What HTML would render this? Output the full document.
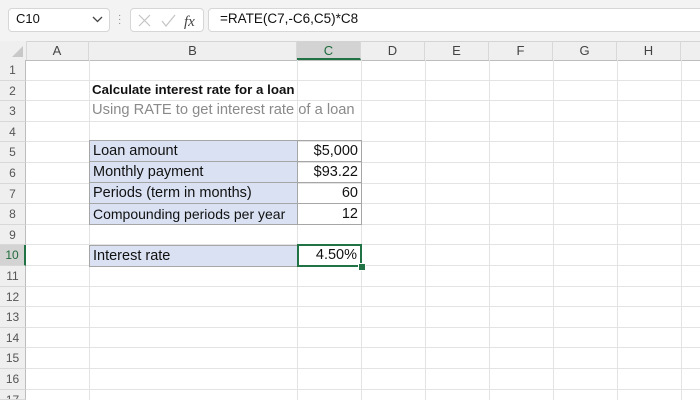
<!DOCTYPE html>
<html style="width:700px;height:400px;overflow:hidden"><head><style>
body{margin:0;width:700px;height:400px;overflow:hidden;background:#fff;font-family:"Liberation Sans",sans-serif;position:relative}
.a{position:absolute}
.top{left:0;top:0;width:700px;height:41px;background:#f3f3f3}
.box{background:#fff;border:1px solid #d6d6d6;border-radius:4px;height:22px}
.hdr{top:41px;height:18px;background:#efefef;border-bottom:1px solid #bdbdbd;border-top:1px solid #d4d4d4}
.ch{top:41px;height:19px;text-align:center;font-size:13px;line-height:19px;color:#444;border-right:1px solid #d8d8d8;box-sizing:border-box}
.rh{left:0;width:26px;text-align:center;font-size:12px;color:#555;background:#efefef;border-bottom:1px solid #d8d8d8;box-sizing:border-box;border-right:1px solid #bdbdbd}
.hl{left:26px;width:674px;height:1px;background:#e3e3e3}
.vl{top:60px;width:1px;height:340px;background:#e3e3e3}
.t{font-size:14px;color:#111;white-space:nowrap}
.cell{box-sizing:border-box;border:1px solid #a6a6a6;font-size:14.5px;line-height:20px;color:#111;white-space:nowrap}
</style></head><body>
<div class="a top"></div>
<div class="a box" style="left:8px;top:8px;width:100px"></div>
<div class="a t" style="left:16px;top:11px;font-size:13px">C10</div>
<svg class="a" style="left:92px;top:16px" width="11" height="7"><path d="M1 1l4.5 4.5L10 1" fill="none" stroke="#444" stroke-width="1.3"/></svg>
<div class="a" style="left:118px;top:14px;color:#888;font-size:10px;line-height:4px">·<br>·<br>·</div>
<div class="a box" style="left:130px;top:8px;width:72px"></div>
<svg class="a" style="left:137px;top:13px" width="60" height="16"><path d="M2 2l11 11M13 2L2 13" stroke="#c4c4c4" stroke-width="1.2"/><path d="M25 8l4 5 9-11" fill="none" stroke="#c4c4c4" stroke-width="1.2"/><text x="47" y="13" font-family="Liberation Serif" font-style="italic" font-size="15" fill="#444">fx</text></svg>
<div class="a box" style="left:208px;top:8px;width:500px"></div>
<div class="a t" style="left:220px;top:11px;font-size:13.5px">=RATE(C7,-C6,C5)*C8</div>
<div class="a hdr" style="left:0;width:700px"></div>
<div class="a" style="left:0;top:41px;width:26px;height:19px;background:#efefef;border-right:1px solid #d8d8d8"></div>
<svg class="a" style="left:12px;top:46px" width="12" height="12"><path d="M11 0V11H0Z" fill="#c8c8c8"/></svg>
<div class="a ch" style="left:26px;width:63px">A</div>
<div class="a ch" style="left:89px;width:208px">B</div>
<div class="a ch" style="left:297px;width:64px;background:#d3d3d3;color:#1e6b3c;border-bottom:2px solid #217346">C</div>
<div class="a ch" style="left:361px;width:64px">D</div>
<div class="a ch" style="left:425px;width:64px">E</div>
<div class="a ch" style="left:489px;width:64px">F</div>
<div class="a ch" style="left:553px;width:64px">G</div>
<div class="a ch" style="left:617px;width:64px">H</div>
<div class="a ch" style="left:681px;width:20px"></div>

<div class="a vl" style="left:89px"></div><div class="a vl" style="left:297px"></div><div class="a vl" style="left:361px"></div><div class="a vl" style="left:425px"></div><div class="a vl" style="left:489px"></div><div class="a vl" style="left:553px"></div><div class="a vl" style="left:617px"></div><div class="a vl" style="left:681px"></div>

<div id="rows"></div>
<script>
let h='';for(let i=1;i<=17;i++){let y=60+(i-1)*20.6;let hh=Math.min(20.6,400-y);h+=`<div class="a rh" style="top:${y}px;height:${hh}px;line-height:20.6px;overflow:hidden;${i==10?'background:#d3d3d3;color:#1e6b3c;border-right:2px solid #217346':''}">${i}</div>`;if(y+19.6<400)h+=`<div class="a hl" style="top:${y+19.6}px"></div>`}
document.getElementById('rows').innerHTML=h;
</script>

<div class="a t" style="left:92px;top:82px;font-weight:bold;font-size:13.3px">Calculate interest rate for a loan</div>
<div class="a t" style="left:92px;top:102px;color:#8a8a8a;font-size:14.7px">Using RATE to get interest rate of a loan</div>

<div class="a cell" style="left:89px;top:140px;width:209px;height:22px;background:#d9e1f2;padding-left:3px">Loan amount</div>
<div class="a cell" style="left:297px;top:140px;width:65px;height:22px;text-align:right;padding-right:3px">$5,000</div>
<div class="a cell" style="left:89px;top:161px;width:209px;height:22px;background:#d9e1f2;padding-left:3px">Monthly payment</div>
<div class="a cell" style="left:297px;top:161px;width:65px;height:22px;text-align:right;padding-right:3px">$93.22</div>
<div class="a cell" style="left:89px;top:182px;width:209px;height:22px;background:#d9e1f2;padding-left:3px">Periods (term in months)</div>
<div class="a cell" style="left:297px;top:182px;width:65px;height:22px;text-align:right;padding-right:3px">60</div>
<div class="a cell" style="left:89px;top:203px;width:209px;height:22px;background:#d9e1f2;padding-left:3px;font-size:14px">Compounding periods per year</div>
<div class="a cell" style="left:297px;top:203px;width:65px;height:22px;text-align:right;padding-right:3px">12</div>

<div class="a cell" style="left:89px;top:245px;width:209px;height:22px;background:#d9e1f2;padding-left:3px">Interest rate</div>
<div class="a cell" style="left:297px;top:244px;width:65px;height:23px;text-align:right;padding-right:3px;border:2px solid #217346;line-height:19px">4.50%</div>
<div class="a" style="left:358px;top:263px;width:6px;height:6px;background:#217346;border:1px solid #fff"></div>
</body></html>
